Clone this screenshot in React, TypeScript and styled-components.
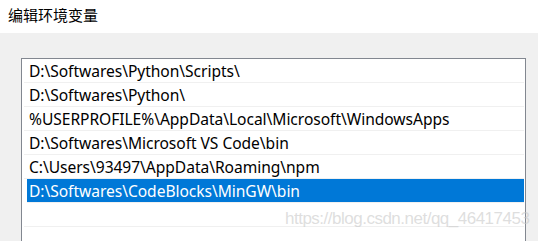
import React from 'react'
import styled, { createGlobalStyle } from 'styled-components'

const GlobalStyle = createGlobalStyle`
  html, body {
    margin: 0;
    padding: 0;
    background: #f0f0f0;
    overflow: hidden;
  }
`

const Window = styled.div`
  width: 538px;
  height: 241px;
  display: flex;
  flex-direction: column;
  background: #f0f0f0;
  font-family: 'Noto Sans', 'Noto Sans CJK SC', sans-serif;
  overflow: hidden;
`

const TitleBar = styled.div`
  height: 33px;
  background: #ffffff;
  padding-left: 8px;
  display: flex;
  align-items: flex-start;
  box-sizing: border-box;
  padding-top: 4px;
`

const Title = styled.span`
  font-family: 'Noto Sans CJK SC', sans-serif;
  font-size: 15px;
  color: #000;
`

const Body = styled.div`
  flex: 1;
  padding: 25px 12px 0 21px;
`

const ListBox = styled.div`
  position: relative;
  height: 100%;
  border: 1px solid #828790;
  border-bottom: none;
  background: #fff;
  padding: 0 1px 0 1px;
`

const Row = styled.div<{ $selected?: boolean }>`
  height: 24px;
  display: flex;
  align-items: center;
  border-bottom: 1px solid #f0f0f0;
  box-sizing: border-box;
  font-size: 15.6px;
  letter-spacing: -0.05px;
  color: ${p => (p.$selected ? '#fff' : '#000')};
  background: ${p => (p.$selected ? '#0078d7' : '#fff')};
  margin-left: ${p => (p.$selected ? '4px' : '1px')};
  padding-left: ${p => (p.$selected ? '2px' : '5px')};
  white-space: nowrap;
`

const Watermark = styled.div`
  position: absolute;
  left: 263px;
  top: 150px;
  font-family: 'Liberation Sans', Arial, sans-serif;
  font-size: 17px;
  letter-spacing: -0.5px;
  color: rgba(200, 200, 200, 0.6);
  pointer-events: none;
  white-space: nowrap;
`

const paths = [
  'D:\\Softwares\\Python\\Scripts\\',
  'D:\\Softwares\\Python\\',
  '%USERPROFILE%\\AppData\\Local\\Microsoft\\WindowsApps',
  'D:\\Softwares\\Microsoft VS Code\\bin',
  'C:\\Users\\93497\\AppData\\Roaming\\npm',
  'D:\\Softwares\\CodeBlocks\\MinGW\\bin',
  '',
]

const App = () => {
  return (
    <Window>
      <GlobalStyle />
      <TitleBar>
        <Title>编辑环境变量</Title>
      </TitleBar>
      <Body>
        <ListBox>
          {paths.map((p, i) => (
            <Row key={i} $selected={i === 5}>
              {p}
            </Row>
          ))}
          <Watermark>https://blog.csdn.net/qq_46417453</Watermark>
        </ListBox>
      </Body>
    </Window>
  )
}

export default App
